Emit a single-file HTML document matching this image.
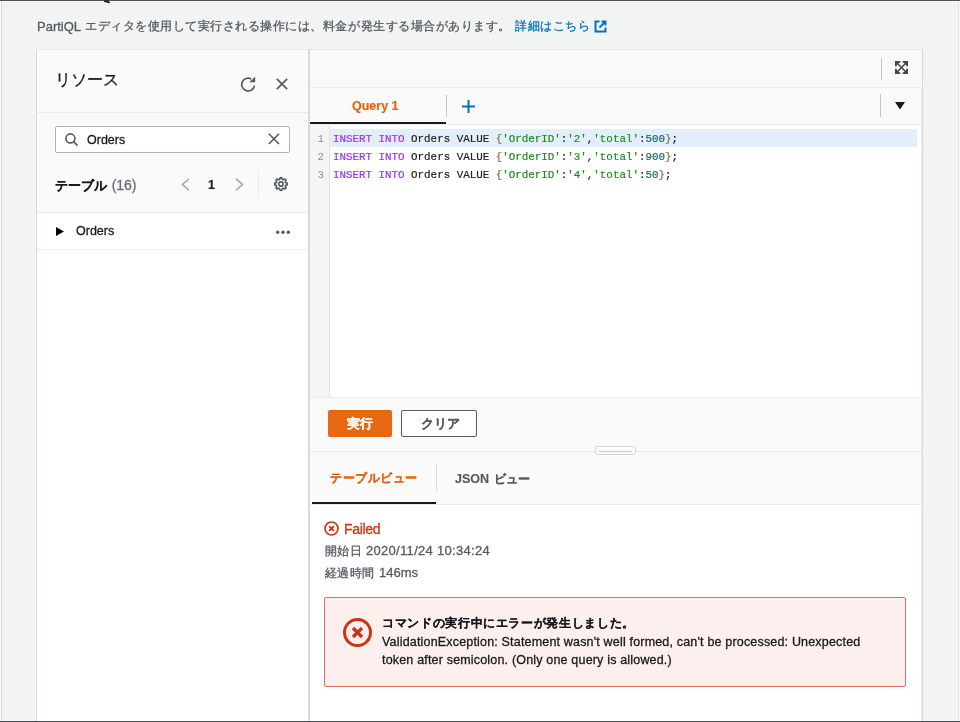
<!DOCTYPE html>
<html><head><meta charset="utf-8">
<style>
*{box-sizing:border-box;margin:0;padding:0}
html,body{width:960px;height:722px;overflow:hidden;background:#f2f3f3;font-family:"Liberation Sans",sans-serif;color:#16191f}
body{position:relative}
.a{position:absolute}
.t{white-space:nowrap;line-height:16px;-webkit-text-stroke:0.3px currentColor}
svg{position:absolute;overflow:visible}
.code{font-family:"Liberation Mono",monospace;font-size:10.85px;line-height:18px;white-space:pre;color:#222;-webkit-text-stroke:0.2px currentColor}
.kw{color:#9c33f2}
.pn{color:#77773f}
.st{color:#23891f}
.nm{color:#1c6b62}
.ln{font-family:"Liberation Mono",monospace;font-size:10.85px;line-height:18px;color:#879596;text-align:right;width:10px}
.t,.code,.ln{will-change:transform}[style*="bold"]{-webkit-text-stroke:0.15px currentColor}</style></head><body>
<!-- frame lines -->
<div class="a" style="left:0;top:0;width:960px;height:1px;background:#4f565e"></div>
<div class="a" style="left:0;top:1px;width:1px;height:721px;background:#fbfbfb"></div>
<div class="a" style="left:1px;top:1px;width:1px;height:721px;background:#d5dbdb"></div>
<div class="a" style="left:958px;top:1px;width:1px;height:721px;background:#e3e6e6"></div>
<div class="a" style="left:959px;top:1px;width:1px;height:721px;background:#f7f7f7"></div>
<div class="a" style="left:0;top:721px;width:960px;height:1px;background:#4f565e"></div>
<svg style="left:100px;top:0" width="14" height="5" viewBox="0 0 14 5"><path d="M3.6 0.5H8.4L10.2 3.1L9.2 3.2Q6.5 2.6 4.2 2Z" fill="#16191f"/></svg>

<!-- description -->
<div class="a t" style="left:37px;top:19px;font-size:13px;color:#545b64">PartiQL<span style="font-size:12px;letter-spacing:0.52px;margin-left:4px;position:relative;top:-1.5px">エディタを使用して実行される操作には、料金が発生する場合があります。</span></div>
<div class="a t" style="left:515px;top:17.5px;font-size:12px;letter-spacing:0.55px;color:#0073bb">詳細はこちら</div>
<svg style="left:594px;top:20px" width="13" height="13" viewBox="0 0 13 13"><path d="M5.5 1.5H1.5V11.5H11.5V7.5" fill="none" stroke="#0073bb" stroke-width="2"/><path d="M7.5 1.5H11.5V5.5M11.5 1.5L5.5 7.5" fill="none" stroke="#0073bb" stroke-width="2"/></svg>

<!-- LEFT PANEL -->
<div class="a" style="left:36px;top:49px;width:273px;height:672px;background:#fff"></div>
<div class="a" style="left:36px;top:49px;width:273px;height:1px;background:#eaeded"></div>
<div class="a" style="left:36px;top:49px;width:1px;height:672px;background:#d5dbdb"></div>
<div class="a" style="left:37px;top:50px;width:272px;height:62px;background:#fafafa"></div>
<div class="a" style="left:37px;top:112px;width:272px;height:1px;background:#eaeded"></div>
<div class="a" style="left:37px;top:113px;width:272px;height:99px;background:#fafafa"></div>
<div class="a" style="left:37px;top:212px;width:272px;height:1px;background:#eaeded"></div>
<div class="a" style="left:37px;top:249px;width:272px;height:1px;background:#eaeded"></div>

<div class="a t" style="left:54.5px;top:70px;font-size:16px;line-height:20px;color:#16191f">リソース</div>
<!-- refresh -->
<svg style="left:241px;top:77px" width="15" height="15" viewBox="0 0 15 15"><path d="M13.4 8.6A6.4 6.4 0 1 1 10.2 1.9" fill="none" stroke="#545b64" stroke-width="1.7"/><path d="M8.3 5.2H14.2V-0.6Z" fill="#545b64"/></svg>
<!-- close -->
<svg style="left:276px;top:78px" width="12" height="12" viewBox="0 0 12 12"><path d="M0.8 0.8L11.2 11.2M11.2 0.8L0.8 11.2" stroke="#545b64" stroke-width="1.7"/></svg>

<!-- search -->
<div class="a" style="left:55px;top:126px;width:235px;height:27px;background:#fff;border:1px solid #aab7b8;border-radius:2px"></div>
<svg style="left:65px;top:133px" width="14" height="14" viewBox="0 0 14 14"><circle cx="5.4" cy="5.4" r="4.5" fill="none" stroke="#545b64" stroke-width="1.6"/><path d="M8.6 8.6L12.6 12.6" stroke="#545b64" stroke-width="1.7"/></svg>
<div class="a t" style="left:87px;top:132px;font-size:12.5px;color:#16191f">Orders</div>
<svg style="left:268px;top:133px" width="12" height="12" viewBox="0 0 12 12"><path d="M0.8 0.8L11 11M11 0.8L0.8 11" stroke="#545b64" stroke-width="1.6"/></svg>

<!-- table header -->
<div class="a t" style="left:55px;top:177px;font-size:13px;line-height:16px;font-weight:bold;color:#16191f">テーブル <span style="font-weight:normal;color:#687078;font-size:14px;margin-left:1px;-webkit-text-stroke:0.3px currentColor">(16)</span></div>
<svg style="left:181px;top:178px" width="9" height="13" viewBox="0 0 9 13"><path d="M8 0.8L1.5 6.5L8 12.2" fill="none" stroke="#95a5a6" stroke-width="1.5"/></svg>
<div class="a t" style="left:208px;top:177px;font-size:12.5px;font-weight:bold;color:#16191f">1</div>
<svg style="left:235px;top:178px" width="9" height="13" viewBox="0 0 9 13"><path d="M1 0.8L7.5 6.5L1 12.2" fill="none" stroke="#95a5a6" stroke-width="1.5"/></svg>
<div class="a" style="left:258px;top:171px;width:1px;height:26px;background:#eaeded"></div>
<svg style="left:273.2px;top:176.3px" width="16" height="16" viewBox="0 0 16 16"><path d="M8.00 1.65 L8.25 1.65 L8.50 1.67 L8.74 1.79 L8.93 2.15 L9.08 2.56 L9.21 2.96 L9.32 3.34 L9.47 3.48 L9.64 3.54 L9.82 3.61 L9.99 3.69 L10.16 3.77 L10.37 3.77 L10.71 3.58 L11.08 3.39 L11.48 3.21 L11.87 3.09 L12.12 3.17 L12.31 3.34 L12.49 3.51 L12.66 3.69 L12.83 3.88 L12.91 4.13 L12.79 4.52 L12.61 4.92 L12.42 5.29 L12.23 5.63 L12.23 5.84 L12.31 6.01 L12.39 6.18 L12.46 6.36 L12.52 6.53 L12.66 6.68 L13.04 6.79 L13.44 6.92 L13.85 7.07 L14.21 7.26 L14.33 7.50 L14.35 7.75 L14.35 8.00 L14.35 8.25 L14.33 8.50 L14.21 8.74 L13.85 8.93 L13.44 9.08 L13.04 9.21 L12.66 9.32 L12.52 9.47 L12.46 9.64 L12.39 9.82 L12.31 9.99 L12.23 10.16 L12.23 10.37 L12.42 10.71 L12.61 11.08 L12.79 11.48 L12.91 11.87 L12.83 12.12 L12.66 12.31 L12.49 12.49 L12.31 12.66 L12.12 12.83 L11.87 12.91 L11.48 12.79 L11.08 12.61 L10.71 12.42 L10.37 12.23 L10.16 12.23 L9.99 12.31 L9.82 12.39 L9.64 12.46 L9.47 12.52 L9.32 12.66 L9.21 13.04 L9.08 13.44 L8.93 13.85 L8.74 14.21 L8.50 14.33 L8.25 14.35 L8.00 14.35 L7.75 14.35 L7.50 14.33 L7.26 14.21 L7.07 13.85 L6.92 13.44 L6.79 13.04 L6.68 12.66 L6.53 12.52 L6.36 12.46 L6.18 12.39 L6.01 12.31 L5.84 12.23 L5.63 12.23 L5.29 12.42 L4.92 12.61 L4.52 12.79 L4.13 12.91 L3.88 12.83 L3.69 12.66 L3.51 12.49 L3.34 12.31 L3.17 12.12 L3.09 11.87 L3.21 11.48 L3.39 11.08 L3.58 10.71 L3.77 10.37 L3.77 10.16 L3.69 9.99 L3.61 9.82 L3.54 9.64 L3.48 9.47 L3.34 9.32 L2.96 9.21 L2.56 9.08 L2.15 8.93 L1.79 8.74 L1.67 8.50 L1.65 8.25 L1.65 8.00 L1.65 7.75 L1.67 7.50 L1.79 7.26 L2.15 7.07 L2.56 6.92 L2.96 6.79 L3.34 6.68 L3.48 6.53 L3.54 6.36 L3.61 6.18 L3.69 6.01 L3.77 5.84 L3.77 5.63 L3.58 5.29 L3.39 4.92 L3.21 4.52 L3.09 4.13 L3.17 3.88 L3.34 3.69 L3.51 3.51 L3.69 3.34 L3.88 3.17 L4.13 3.09 L4.52 3.21 L4.92 3.39 L5.29 3.58 L5.63 3.77 L5.84 3.77 L6.01 3.69 L6.18 3.61 L6.36 3.54 L6.53 3.48 L6.68 3.34 L6.79 2.96 L6.92 2.56 L7.07 2.15 L7.26 1.79 L7.50 1.67 L7.75 1.65Z" fill="none" stroke="#545b64" stroke-width="1.7" stroke-linejoin="round"/><circle cx="8" cy="8" r="2.1" fill="none" stroke="#545b64" stroke-width="1.6"/></svg>

<!-- row -->
<svg style="left:56px;top:227px" width="8" height="9" viewBox="0 0 8 9"><path d="M0 0L8 4.5L0 9Z" fill="#000"/></svg>
<div class="a t" style="left:76px;top:223px;font-size:12.5px;color:#16191f">Orders</div>
<svg style="left:276px;top:230px" width="14" height="5" viewBox="0 0 14 5"><circle cx="1.7" cy="2.2" r="1.7" fill="#545b64"/><circle cx="7" cy="2.2" r="1.7" fill="#545b64"/><circle cx="12.3" cy="2.2" r="1.7" fill="#545b64"/></svg>

<!-- RIGHT PANEL -->
<div class="a" style="left:309px;top:49px;width:614px;height:672px;background:#fafafa"></div>
<div class="a" style="left:309px;top:49px;width:614px;height:1px;background:#e6e9e9"></div>
<div class="a" style="left:308px;top:49px;width:2px;height:672px;background:#d5dbdb"></div>
<div class="a" style="left:922px;top:49px;width:1px;height:672px;background:#d5dbdb"></div><div class="a" style="left:921px;top:88px;width:1px;height:633px;background:#ebeded"></div>
<div class="a" style="left:310px;top:87px;width:611px;height:1px;background:#eaeded"></div>
<!-- toolbar -->
<div class="a" style="left:881px;top:58px;width:1px;height:22px;background:#c6c6c6"></div>
<svg style="left:895px;top:61px" width="13" height="13" viewBox="0 0 13 13"><path fill="#414750" d="M0 0H5.3V1.8H1.8V5.3H0Z M13 0V5.3H11.2V1.8H7.7V0Z M0 13V7.7H1.8V11.2H5.3V13Z M13 13H7.7V11.2H11.2V7.7H13Z M1.5 1.5H4.4L1.5 4.4Z M11.5 1.5V4.4L8.6 1.5Z M1.5 11.5V8.6L4.4 11.5Z M11.5 11.5H8.6L11.5 8.6Z"/><path d="M2 2L11 11M11 2L2 11" stroke="#414750" stroke-width="1.5"/></svg>
<!-- tabs -->
<div class="a t" style="left:352px;top:98px;font-size:12.5px;font-weight:bold;color:#e8600a">Query 1</div>
<div class="a" style="left:310px;top:122px;width:136px;height:2px;background:#16191f"></div>
<div class="a" style="left:446px;top:95px;width:1px;height:22px;background:#c6c6c6"></div>
<svg style="left:462px;top:100px" width="13" height="13" viewBox="0 0 13 13"><path d="M6.5 0V13M0 6.5H13" stroke="#0073bb" stroke-width="2"/></svg>
<div class="a" style="left:880px;top:94px;width:1px;height:23px;background:#c6c6c6"></div>
<svg style="left:895px;top:102px" width="10" height="8" viewBox="0 0 10 8"><path d="M0 0H10L5 7.5Z" fill="#16191f"/></svg>
<div class="a" style="left:310px;top:124px;width:611px;height:1px;background:#eaeded"></div>

<!-- editor -->
<div class="a" style="left:310px;top:125px;width:611px;height:272px;background:#fff"></div>
<div class="a" style="left:310px;top:125px;width:19px;height:272px;background:#f5f5f5"></div>
<div class="a" style="left:329px;top:125px;width:1px;height:272px;background:#e3e3e3"></div>
<div class="a" style="left:330px;top:129px;width:587px;height:18px;background:#e3eefc"></div>
<div class="a" style="left:311px;top:130px">
 <div class="ln a" style="left:3px;top:0">1</div>
 <div class="ln a" style="left:3px;top:18px">2</div>
 <div class="ln a" style="left:3px;top:36px">3</div>
</div>
<div class="a code" style="left:333px;top:130px"><span class="kw">INSERT</span> <span class="kw">INTO</span> Orders VALUE <span class="pn">{</span><span class="st">'OrderID'</span>:<span class="st">'2'</span>,<span class="st">'total'</span>:<span class="nm">500</span><span class="pn">}</span>;
<span class="kw">INSERT</span> <span class="kw">INTO</span> Orders VALUE <span class="pn">{</span><span class="st">'OrderID'</span>:<span class="st">'3'</span>,<span class="st">'total'</span>:<span class="nm">900</span><span class="pn">}</span>;
<span class="kw">INSERT</span> <span class="kw">INTO</span> Orders VALUE <span class="pn">{</span><span class="st">'OrderID'</span>:<span class="st">'4'</span>,<span class="st">'total'</span>:<span class="nm">50</span><span class="pn">}</span>;</div>
<div class="a" style="left:310px;top:397px;width:611px;height:1px;background:#eaeded"></div>

<!-- buttons -->
<div class="a" style="left:328px;top:410px;width:64px;height:27px;background:#e8680f;border-radius:2px"></div>
<div class="a t" style="left:347px;top:416px;font-size:12.5px;font-weight:bold;color:#fff">実行</div>
<div class="a" style="left:401px;top:410px;width:76px;height:27px;background:#fff;border:1px solid #545b64;border-radius:2px"></div>
<div class="a t" style="left:421px;top:416px;font-size:12.5px;font-weight:bold;color:#545b64">クリア</div>

<!-- divider with handle -->
<div class="a" style="left:310px;top:451px;width:611px;height:1px;background:#eaeded"></div>
<div class="a" style="left:595px;top:446px;width:41px;height:9px;background:#fafafa;border:1px solid #d9d9d9;border-radius:2px"></div>
<div class="a" style="left:599px;top:451px;width:33px;height:1px;background:#cfcfcf"></div>

<!-- result tabs -->
<div class="a t" style="left:329.5px;top:470px;font-size:12px;letter-spacing:0.5px;font-weight:bold;color:#e8600a">テーブルビュー</div>
<div class="a" style="left:436px;top:464px;width:1px;height:27px;background:#d5dbdb"></div>
<div class="a t" style="left:455px;top:471px;font-size:12.5px;font-weight:bold;color:#545b64">JSON<span style="font-size:12px;margin-left:5px;letter-spacing:-0.2px">ビュー</span></div>
<div class="a" style="left:312px;top:502px;width:124px;height:2px;background:#16191f"></div>
<div class="a" style="left:310px;top:504px;width:611px;height:1px;background:#eaeded"></div>
<div class="a" style="left:310px;top:505px;width:611px;height:216px;background:#fff"></div>

<!-- status -->
<svg style="left:324px;top:521px" width="15" height="15" viewBox="0 0 15 15"><circle cx="7.5" cy="7.5" r="6.5" fill="none" stroke="#d13212" stroke-width="1.7"/><path d="M5.1 5.1L9.9 9.9M9.9 5.1L5.1 9.9" stroke="#d13212" stroke-width="1.8"/></svg>
<div class="a t" style="left:344px;top:521px;font-size:14px;letter-spacing:-0.3px;color:#d13212">Failed</div>
<div class="a t" style="left:324.5px;top:543px;font-size:12px;letter-spacing:0.35px;color:#545b64">開始日</div><div class="a t" style="left:366px;top:543px;font-size:13px;letter-spacing:0.3px;color:#545b64">2020/11/24 10:34:24</div>
<div class="a t" style="left:324.5px;top:565px;font-size:12px;letter-spacing:0.35px;color:#545b64">経過時間</div><div class="a t" style="left:379px;top:565px;font-size:13px;color:#545b64">146ms</div>

<!-- alert -->
<div class="a" style="left:324px;top:597px;width:582px;height:90px;background:#fcefed;border:1px solid #e07060;border-radius:2px"></div>
<svg style="left:343px;top:618px" width="29" height="29" viewBox="0 0 29 29"><circle cx="14.5" cy="14.5" r="13" fill="none" stroke="#d13212" stroke-width="3"/><path d="M10 10L19 19M19 10L10 19" stroke="#d13212" stroke-width="3.2"/></svg>
<div class="a t" style="left:382px;top:615px;font-size:12px;letter-spacing:0.65px;font-weight:bold;color:#16191f">コマンドの実行中にエラーが発生しました。</div>
<div class="a t" style="left:382px;top:633px;font-size:12.5px;letter-spacing:0.18px;color:#16191f;line-height:18px">ValidationException: Statement wasn't well formed, can't be processed: Unexpected<br>token after semicolon. (Only one query is allowed.)</div>
</body></html>
